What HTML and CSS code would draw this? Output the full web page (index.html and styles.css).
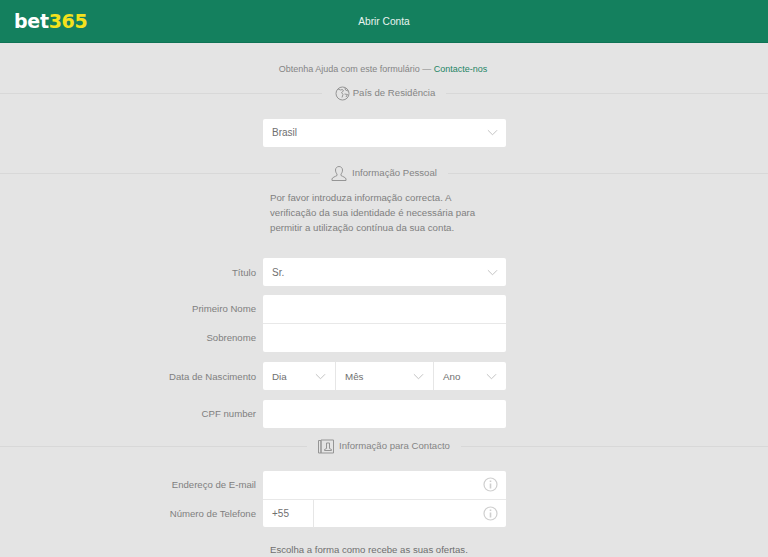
FILE: index.html
```html
<!DOCTYPE html>
<html lang="pt">
<head>
<meta charset="utf-8">
<title>Abrir Conta</title>
<link rel="stylesheet" href="styles.css">
</head>
<body>
<svg width="0" height="0" class="defs">
  <symbol id="chev" viewBox="0 0 12 7"><path d="M1 1l5 5 5-5" fill="none" stroke="#bdbdbd" stroke-width="1"/></symbol>
  <symbol id="info" viewBox="0 0 15 15"><circle cx="7.5" cy="7.5" r="6.5" fill="none" stroke="#cfcfcf" stroke-width="1.2"/><path d="M7.5 6.5v5M7.5 3.6v1.4" stroke="#cfcfcf" stroke-width="1.6" fill="none"/></symbol>
</svg>
<header class="top">
  <div class="logo">bet<span class="logo-y">365</span></div>
  <div class="top-title">Abrir Conta</div>
</header>
<main>
  <p class="help">Obtenha Ajuda com este formulário — <span class="link">Contacte-nos</span></p>

  <div class="sec sec-country">
    <span class="rule"></span>
    <span class="sec-in">
      <svg class="ico" width="15" height="15" viewBox="0 0 15 15" fill="none" stroke="#959595" stroke-width="1"><circle cx="7.5" cy="7.5" r="6.5"/><path d="M3 3l2.500 1 2-.5 1 1.500-2 1.500 1.500 2-1 3M10 2l.5 2 2.500 1M9.500 8l3 .5-1.500 2.500"/></svg>
      <span class="sec-t">País de Residência</span>
    </span>
    <span class="rule"></span>
  </div>
  <div class="row row-country">
    <span class="lab"></span>
    <div class="box sel"><span>Brasil</span><svg class="chev"><use href="#chev"/></svg></div>
  </div>

  <div class="sec sec-person">
    <span class="rule"></span>
    <span class="sec-in">
      <svg class="ico" width="16" height="15" viewBox="0 0 16 15" fill="none" stroke="#959595" stroke-width="1"><path d="M1 14.500v-1.500c0-1.500 3.500-2.500 5-3.500V8C5 7 4.500 5.500 4.500 4 4.500 2 6 .5 8 .5S11.500 2 11.500 4c0 1.500-.5 3-1.500 4v1.500c1.500 1 5 2 5 3.500v1.500z"/></svg>
      <span class="sec-t">Informação Pessoal</span>
    </span>
    <span class="rule"></span>
  </div>
  <p class="note">Por favor introduza informação correcta. A verificação da sua identidade é necessária para permitir a utilização contínua da sua conta.</p>

  <div class="row row-title">
    <span class="lab">Título</span>
    <div class="box sel"><span>Sr.</span><svg class="chev"><use href="#chev"/></svg></div>
  </div>

  <div class="row row-name">
    <div class="labs">
      <span class="lab">Primeiro Nome</span>
      <span class="lab">Sobrenome</span>
    </div>
    <div class="box stack">
      <div class="cell"></div>
      <div class="cell cell-b"></div>
    </div>
  </div>

  <div class="row row-date">
    <span class="lab">Data de Nascimento</span>
    <div class="box date">
      <div class="part p1"><span>Dia</span><svg class="chev"><use href="#chev"/></svg></div>
      <div class="part p2"><span>Mês</span><svg class="chev"><use href="#chev"/></svg></div>
      <div class="part p3"><span>Ano</span><svg class="chev"><use href="#chev"/></svg></div>
    </div>
  </div>

  <div class="row row-cpf">
    <span class="lab">CPF number</span>
    <div class="box"></div>
  </div>

  <div class="sec sec-contact">
    <span class="rule"></span>
    <span class="sec-in">
      <svg class="ico" width="16" height="15" viewBox="0 0 16 15" fill="none" stroke="#959595" stroke-width="1"><path d="M.5 1.500h2.500v12.500H.5zM3 1h12.500v13H3z"/><path d="M6.500 11.500V10.500L8.500 9.500V4h3v5.500l2 1v1z"/></svg>
      <span class="sec-t">Informação para Contacto</span>
    </span>
    <span class="rule"></span>
  </div>

  <div class="row row-contact">
    <div class="labs">
      <span class="lab">Endereço de E-mail</span>
      <span class="lab">Número de Telefone</span>
    </div>
    <div class="box stack">
      <div class="cell"><svg class="info"><use href="#info"/></svg></div>
      <div class="cell cell-b">
        <span class="dial">+55</span>
        <svg class="info"><use href="#info"/></svg>
      </div>
    </div>
  </div>

  <p class="offers">Escolha a forma como recebe as suas ofertas.</p>
</main>
</body>
</html>
```
FILE: styles.css
```css
* { box-sizing: border-box; }
html, body { margin: 0; height: 557px; overflow: hidden; }
body { background: #e4e4e4; font-family: "Liberation Sans", Arial, sans-serif; font-size: 10px; color: #7c7c7c; }
.defs { position: absolute; }

.top { height: 43px; background: #14805e; border-bottom: 1px solid #0f7355; position: relative; display: flex; align-items: center; justify-content: center; }
.logo { position: absolute; left: 14px; top: 9px; font-family: "DejaVu Sans", sans-serif; font-weight: 700; font-size: 19px; line-height: 24px; color: #fff; letter-spacing: -.3px; }
.logo-y { color: #f4e21d; }
.top-title { color: #e9f3ef; font-size: 10.200px; }

.help { margin: 20px 0 0; padding-right: 2px; height: 13px; line-height: 13px; text-align: center; font-size: 9px; color: #858585; }
.link { color: #1f8465; }

.sec { display: flex; align-items: center; height: 16px; }
.rule { flex: 1; height: 1px; background: #d8d8d8; }
.sec-in { display: flex; align-items: center; gap: 5px; padding: 0 11px; font-size: 9.600px; color: #858585; white-space: nowrap; }
.sec-t { padding-bottom: 2px; }
.ico { flex: none; }

.sec-country { margin-top: 9px; }
.sec-country .sec-in { gap: 3px; padding-left: 13px; }
.row-country { margin-top: 18px; }
.row-country .sel { padding-bottom: 2px; }
.sec-person { margin-top: 18px; }

.note { width: 220px; margin: 9px 0 0 270px; font-size: 9.700px; line-height: 15px; color: #7f7f7f; }

.row { display: flex; align-items: center; }
.lab { width: 256px; text-align: right; font-size: 9.600px; line-height: 15px; color: #7f7f7f; }
.box { width: 243px; height: 28px; margin-left: 7px; background: #fff; border-radius: 2px; color: #6f6f6f; }
.row-country .lab { height: 0; }
.sel { display: flex; align-items: center; justify-content: space-between; padding: 0 8px 0 9px; font-size: 10px; }
.chev { width: 11px; height: 7px; flex: none; }

.row-title { margin-top: 23px; }
.row-name { margin-top: 8px; }
.labs { width: 256px; display: flex; flex-direction: column; }
.labs .lab { height: 29px; display: flex; align-items: center; justify-content: flex-end; width: auto; }
.stack { height: auto; }
.cell { height: 28px; display: flex; align-items: center; justify-content: flex-end; padding-right: 8px; }
.cell-b { height: 29px; border-top: 1px solid #e8e8e8; }
.row-name .stack { height: 57px; }

.row-date { margin-top: 10px; }
.date { display: flex; }
.part { display: flex; align-items: center; justify-content: space-between; padding: 0 9px; font-size: 9.800px; border-left: 1px solid #e6e6e6; }
.p1 { width: 72px; border-left: 0; }
.p2 { width: 98px; }
.p3 { width: 73px; }

.row-cpf { margin-top: 10px; }
.row-cpf .lab { padding-bottom: 2px; }

.sec-contact { margin-top: 10px; }
.row-contact { margin-top: 16px; }
.row-contact .stack { height: 56px; }
.row-contact .cell { padding-bottom: 2px; }
.row-contact .cell-b { padding-bottom: 0; }
.dial { width: 51px; height: 100%; display: flex; align-items: center; padding: 0 0 2px 9px; margin-right: auto; border-right: 1px solid #e6e6e6; font-size: 10px; }
.info { width: 15px; height: 15px; flex: none; margin-bottom: 0; }
.cell-b .info { margin-bottom: 2px; }

.offers { margin: 14px 0 0 270px; font-size: 9.600px; line-height: 15px; color: #6f6f6f; }
```
